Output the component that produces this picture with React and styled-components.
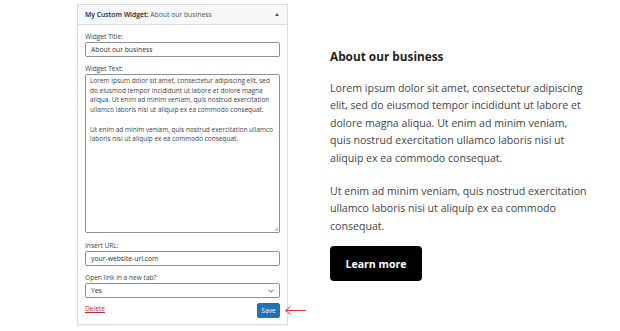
import styled, { createGlobalStyle } from "styled-components";

const GlobalStyle = createGlobalStyle`
  html, body {
    margin: 0;
    padding: 0;
    background: #ffffff;
  }
  * {
    box-sizing: border-box;
  }
`;

const Page = styled.div`
  display: flex;
  align-items: flex-start;
  width: 620px;
  height: 331px;
  padding: 4px 0 0 77px;
  overflow: hidden;
`;

const Widget = styled.div`
  width: 211px;
  border: 1px solid #dcdcde;
  background: #fff;
  font-family: "Open Sans", "Noto Sans", sans-serif;
  color: #3c434a;
  box-shadow: 0 1px 1px rgba(0, 0, 0, 0.04);
`;

const WidgetHeader = styled.div`
  display: flex;
  align-items: center;
  justify-content: space-between;
  height: 20px;
  padding: 0 8px 0 7px;
  background: #f6f7f7;
  border-bottom: 1px solid #dcdcde;
  font-size: 6.8px;
  color: #1d2327;

  strong {
    font-weight: 600;
  }
  span {
    color: #50575e;
  }
`;

const Caret = styled.span`
  width: 0;
  height: 0;
  border-left: 2.5px solid transparent;
  border-right: 2.5px solid transparent;
  border-bottom: 3px solid #50575e;
`;

const WidgetBody = styled.div`
  display: flex;
  flex-direction: column;
  padding: 8px 7px 6px 7px;
`;

const Field = styled.div`
  display: flex;
  flex-direction: column;
  margin-bottom: ${(p) => p.$gap ?? 8}px;
`;

const Label = styled.label`
  font-size: 6.6px;
  color: #3c434a;
  line-height: 8px;
  margin-bottom: 1px;
`;

const Input = styled.div`
  height: 15px;
  border: 1px solid #8c8f94;
  border-radius: 2px;
  padding: 0 5px;
  display: flex;
  align-items: center;
  justify-content: space-between;
  font-size: 6.8px;
  color: #2c3338;
`;

const TextArea = styled.div`
  position: relative;
  height: 159px;
  border: 1px solid #8c8f94;
  border-radius: 2px;
  padding: 1px 3px 1px 4px;
  font-size: 6.5px;
  line-height: 9.7px;
  color: #3c434a;

  p {
    margin: 0 0 9.7px 0;
  }
`;

const Grip = styled.span`
  position: absolute;
  right: 1px;
  bottom: 1px;
  width: 0;
  height: 0;
  border-left: 4px solid transparent;
  border-bottom: 4px solid #c3c4c7;
`;

const Chevron = styled.svg`
  width: 6px;
  height: 4px;
`;

const Actions = styled.div`
  display: flex;
  align-items: flex-start;
  justify-content: space-between;
`;

const DeleteLink = styled.a`
  font-size: 6.6px;
  color: #b32d2e;
  text-decoration: underline;
`;

const SaveWrap = styled.div`
  position: relative;
  margin-top: -1px;
`;

const SaveButton = styled.button`
  display: block;
  font-family: "Open Sans", "Noto Sans", sans-serif;
  font-size: 6.6px;
  color: #fff;
  background: #2271b1;
  border: 1px solid #2271b1;
  border-radius: 2px;
  width: 23px;
  height: 15px;
  padding: 0;
`;

const Arrow = styled.svg`
  position: absolute;
  left: 27px;
  top: 2px;
  width: 23px;
  height: 11px;
`;

const Content = styled.div`
  margin-left: 42px;
  margin-top: 44px;
  width: 264px;
  font-family: "Open Sans", "Noto Sans", sans-serif;
`;

const Heading = styled.h3`
  margin: 0 0 16px 0;
  font-size: 11.8px;
  font-weight: 700;
  color: #1f1f1f;
  line-height: 16px;
`;

const Paragraph = styled.p`
  margin: 0 0 ${(p) => (p.$last ? 11 : 16)}px 0;
  font-size: 10.6px;
  line-height: 17.4px;
  color: #444;
`;

const NoWrap = styled.span`
  white-space: nowrap;
`;

const LearnButton = styled.button`
  display: block;
  width: 92px;
  height: 35px;
  background: #000;
  color: #fff;
  border: none;
  border-radius: 4px;
  font-family: "Open Sans", "Noto Sans", sans-serif;
  font-size: 10.6px;
  font-weight: 700;
  padding: 0;
`;

export default function App() {
  return (
    <>
      <GlobalStyle />
      <Page>
        <Widget>
          <WidgetHeader>
            <div>
              <strong>My Custom Widget:</strong> <span>About our business</span>
            </div>
            <Caret />
          </WidgetHeader>
          <WidgetBody>
            <Field>
              <Label>Widget Title:</Label>
              <Input>About our business</Input>
            </Field>
            <Field $gap={9}>
              <Label>Widget Text:</Label>
              <TextArea>
                <p>
                  Lorem ipsum dolor sit amet, consectetur adipiscing elit, sed do
                  eiusmod tempor incididunt ut labore et dolore magna aliqua. Ut
                  enim ad minim veniam, quis nostrud exercitation ullamco laboris
                  nisi ut aliquip ex ea commodo consequat.
                </p>
                <p>
                  Ut enim ad minim veniam, quis nostrud exercitation ullamco
                  laboris nisi ut aliquip ex ea commodo consequat.
                </p>
                <Grip />
              </TextArea>
            </Field>
            <Field>
              <Label>Insert URL:</Label>
              <Input>your-website-url.com</Input>
            </Field>
            <Field $gap={6}>
              <Label>Open link in a new tab?</Label>
              <Input>
                Yes
                <Chevron viewBox="0 0 6 4">
                  <path d="M0.5 0.8 L3 3.2 L5.5 0.8" fill="none" stroke="#50575e" strokeWidth="0.9" />
                </Chevron>
              </Input>
            </Field>
            <Actions>
              <DeleteLink>Delete</DeleteLink>
              <SaveWrap>
                <SaveButton>Save</SaveButton>
                <Arrow viewBox="0 0 23 11">
                  <path d="M22 5.5 H2 M6.5 1.5 L1.5 5.5 L6.5 9.5" fill="none" stroke="#e0314b" strokeWidth="1" />
                </Arrow>
              </SaveWrap>
            </Actions>
          </WidgetBody>
        </Widget>
        <Content>
          <Heading>About our business</Heading>
          <Paragraph>
            Lorem ipsum dolor sit amet, consectetur adipiscing elit, sed do
            eiusmod tempor incididunt ut labore et dolore magna aliqua. Ut enim ad
            minim veniam, <NoWrap>quis nostrud</NoWrap> exercitation ullamco
            laboris nisi ut aliquip ex ea commodo consequat.
          </Paragraph>
          <Paragraph $last>
            Ut enim ad minim veniam, quis nostrud exercitation ullamco laboris
            nisi ut aliquip ex ea commodo consequat.
          </Paragraph>
          <LearnButton>Learn more</LearnButton>
        </Content>
      </Page>
    </>
  );
}
